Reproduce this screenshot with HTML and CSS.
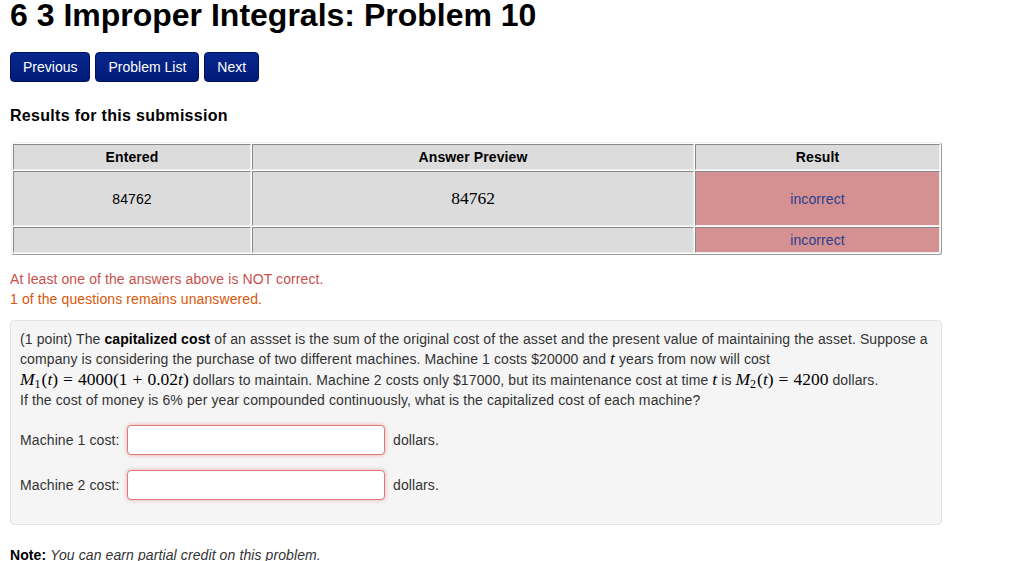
FILE: index.html
```html
<!DOCTYPE html>
<html>
<head>
<meta charset="utf-8">
<link rel="stylesheet" href="styles.css">
</head>
<body>
<h1 class="title">6 3 Improper Integrals: Problem 10</h1>
<div class="nav">
  <a class="btn">Previous</a>
  <a class="btn">Problem List</a>
  <a class="btn">Next</a>
</div>
<h3 class="results-head">Results for this submission</h3>
<table class="attempt">
  <tr class="hdr">
    <th class="c1">Entered</th>
    <th class="c2">Answer Preview</th>
    <th class="c3">Result</th>
  </tr>
  <tr class="row1">
    <td>84762</td>
    <td><span class="math">84762</span></td>
    <td class="bad">incorrect</td>
  </tr>
  <tr class="row2">
    <td></td>
    <td></td>
    <td class="bad">incorrect</td>
  </tr>
</table>
<div class="msg-red">At least one of the answers above is NOT correct.</div>
<div class="msg-orange">1 of the questions remains unanswered.</div>
<div class="problem">
  <p class="ptext">(1 point) The <b>capitalized cost</b> of an assset is the sum of the original cost of the asset and the present value of maintaining the asset. Suppose a company is considering the purchase of two different machines. Machine 1 costs $20000 and <span class="math"><i>t</i></span> years from now will cost<br>
  <span class="math"><i>M</i><span class="sub">1</span>(<i>t</i>)<span class="op">=</span>4000(1<span class="op">+</span>0.02<i>t</i>)</span> dollars to maintain. Machine 2 costs only $17000, but its maintenance cost at time <span class="math"><i>t</i></span> is <span class="math"><i>M</i><span class="sub">2</span>(<i>t</i>)<span class="op">=</span>4200</span> dollars.<br>
  If the cost of money is 6% per year compounded continuously, what is the capitalized cost of each machine?</p>
  <div class="field"><span class="lbl">Machine 1 cost:</span><input class="ans" type="text"><span class="unit">dollars.</span></div>
  <div class="field"><span class="lbl">Machine 2 cost:</span><input class="ans" type="text"><span class="unit">dollars.</span></div>
</div>
<p class="note"><b>Note:</b> <i>You can earn partial credit on this problem.</i></p>
</body>
</html>
```
FILE: styles.css
```css
html, body { margin: 0; padding: 0; background: #fff; }
body {
  font-family: "Liberation Sans", Arial, sans-serif;
  font-size: 14px;
  letter-spacing: 0.1px;
  color: #333;
  padding: 0 10px;
  width: 932px;
}
.title {
  margin: 0;
  font-size: 32px;
  line-height: 30px;
  letter-spacing: 0;
  color: #000;
  font-weight: bold;
}
.nav {
  display: flex;
  gap: 5px;
  margin-top: 22px;
}
.btn {
  display: block;
  height: 28px;
  line-height: 28px;
  padding: 0 12px;
  border: 1px solid #00105a;
  border-radius: 4px;
  color: #fff;
  background: linear-gradient(#08288e, #001a78);
  font-size: 14px;
  letter-spacing: 0;
}
.results-head {
  margin: 24px 0 0;
  font-size: 16px;
  line-height: 20px;
  letter-spacing: 0.3px;
  color: #000;
}
.attempt {
  margin-top: 16px;
  margin-left: 1px;
  width: 931px;
  border-collapse: separate;
  border-spacing: 1px;
  border: 1px solid;
  border-color: #eee #999 #999 #eee;
  border-radius: 3px;
  color: #000;
}
.attempt th, .attempt td {
  background: #dcdcdc;
  text-align: center;
  border: 1px solid;
  border-color: #888 #eee #eee #888;
  padding: 0;
  font-size: 14px;
}
.attempt th { font-weight: bold; height: 24px; }
.c1 { width: 236px; }
.c2 { width: 440px; }
.row1 td { height: 53px; }
.row2 td { height: 24px; }
.attempt td.bad { background: #d59191; color: #2a3d8f; }
.math { font-family: "Liberation Serif", "Times New Roman", serif; font-size: 17.5px; color: #000; line-height: 1; letter-spacing: 0; }
.op { margin: 0 5px; }
.sub { font-size: 12px; position: relative; top: 3px; margin-right: 1px; }
.msg-red { color: #c9504a; margin-top: 14px; line-height: 20px; }
.msg-orange { color: #d9570a; line-height: 20px; }
.problem {
  margin-top: 11px;
  background: #f5f5f5;
  border: 1px solid #e3e3e3;
  border-radius: 4px;
  padding: 8px 9px 24px;
  width: 912px;
}
.ptext { margin: 0; line-height: 20.3px; color: #333; }
.ptext b { color: #000; }
.field {
  display: flex;
  align-items: center;
  margin-top: 15px;
}
.lbl { width: 107px; }
.ans {
  box-sizing: border-box;
  width: 258px;
  height: 30px;
  margin: 0;
  border: 1px solid #e07a7a;
  border-radius: 4px;
  background: #fff;
  box-shadow: 0 0 4px rgba(220, 80, 80, 0.45);
}
.unit { margin-left: 8px; }
.note { margin: 22px 0 0; color: #000; }
.note i { color: #333; }
```
